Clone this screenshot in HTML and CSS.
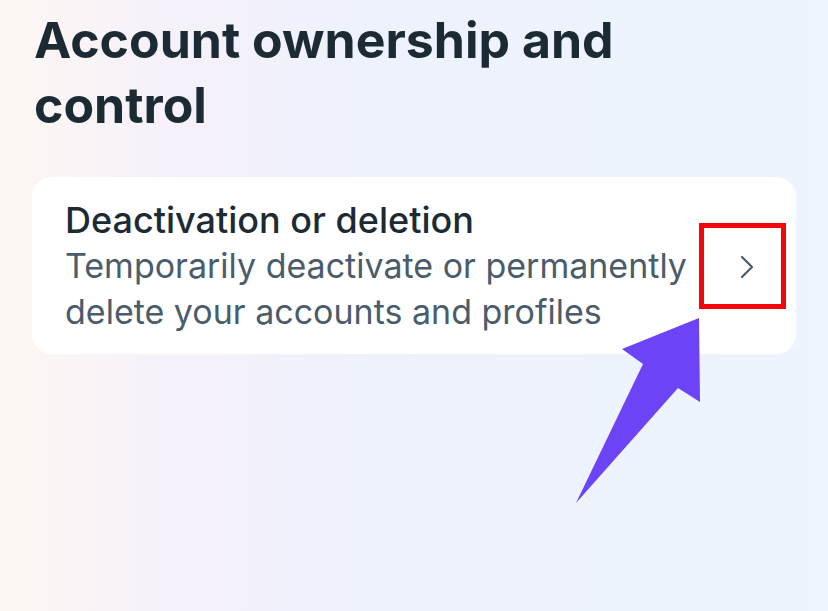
FILE: index.html
```html
<!DOCTYPE html>
<html>
<head>
<meta charset="utf-8">
<link rel="stylesheet" href="styles.css">
</head>
<body>
<main class="page">
  <h1 class="heading">Account ownership and control</h1>
  <div class="card">
    <div class="card-text">
      <div class="card-title">Deactivation or deletion</div>
      <div class="card-sub">Temporarily deactivate or permanently delete your accounts and profiles</div>
    </div>
    <div class="chev">
      <svg width="22" height="26" viewBox="0 0 22 26"><path d="M6 3 L16 13 L6 23" fill="none" stroke="#4b5c6b" stroke-width="2.2" stroke-linecap="round" stroke-linejoin="round"/></svg>
    </div>
  </div>
</main>
<div class="annot-box"></div>
<svg class="annot-arrow" width="828" height="611" viewBox="0 0 828 611">
  <polygon points="699,318 700,402 678,388 576,503 643,364 622,349" fill="#6c43f5"/>
</svg>
</body>
</html>
```
FILE: styles.css
```css
html, body {
  margin: 0;
  padding: 0;
  width: 828px;
  height: 611px;
  overflow: hidden;
}
body {
  background: linear-gradient(90deg, #fdf7f3 0%, #f6f1fa 20%, #eef2fc 45%, #edf4fd 100%);
  font-family: Inter, "Noto Sans", sans-serif;
  position: relative;
}
.page {
  padding: 8px 32px 0 34px;
}
.heading {
  margin: 0;
  font-size: 50px;
  line-height: 65px;
  font-weight: 700;
  color: #1c2b33;
  letter-spacing: 0;
  width: 660px;
}
.card {
  margin-top: 39px;
  margin-left: -2px;
  background: #fff;
  border-radius: 20px;
  display: flex;
  align-items: center;
  padding: 18px 34px 18px 33px;
  min-height: 141px;
}
.card-text {
  flex: 1;
}
.card-title {
  font-size: 36px;
  line-height: 46px;
  font-weight: 500;
  color: #1c2b33;
}
.card-sub {
  font-size: 34px;
  line-height: 46px;
  color: #4b5c6b;
  width: 640px;
}
.chev {
  display: flex;
  align-items: center;
  justify-content: center;
  margin-top: 2px;
  margin-right: 4px;
}
.annot-box {
  position: absolute;
  left: 699px;
  top: 223px;
  width: 77px;
  height: 76px;
  border: 5px solid #f2070b;
}
.annot-arrow {
  position: absolute;
  left: 0;
  top: 0;
}
```
